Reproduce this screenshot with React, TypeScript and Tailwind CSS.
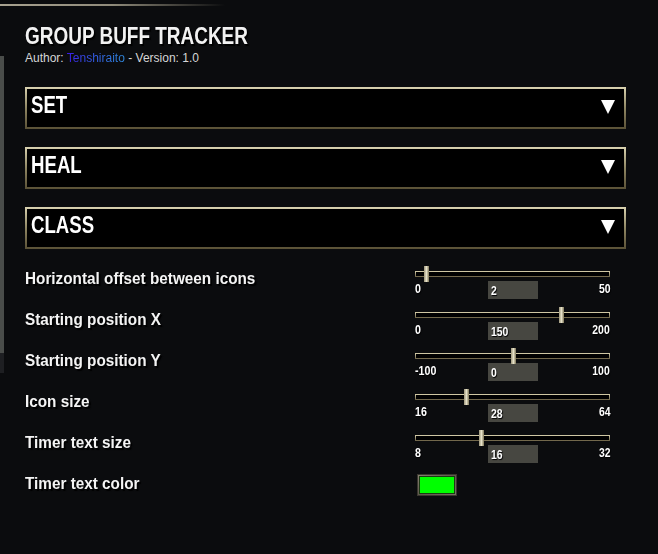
import React from 'react';

// ── Data ──────────────────────────────────────────────────────────────────────

interface SliderRow {
  label: string;
  min: number;
  max: number;
  value: number;
}

const DROPDOWNS = ['SET', 'HEAL', 'CLASS'];

const SLIDERS: SliderRow[] = [
  { label: 'Horizontal offset between icons', min: 0, max: 50, value: 2 },
  { label: 'Starting position X', min: 0, max: 200, value: 150 },
  { label: 'Starting position Y', min: -100, max: 100, value: 0 },
  { label: 'Icon size', min: 16, max: 64, value: 28 },
  { label: 'Timer text size', min: 8, max: 32, value: 16 },
];

// Game UI font is a bold condensed face; squeeze Liberation Sans to match
const LABEL =
  'pt-[4px] text-[17px] leading-[17px] font-bold text-[#f4f4f4] [text-shadow:2px_2px_1px_#000]';

// ── Pieces ────────────────────────────────────────────────────────────────────

function Dropdown({ label }: { label: string }) {
  return (
    <div className="h-[42px] p-[2px] bg-gradient-to-b from-[#d9d2b0] via-[#8f8663] to-[#5a5136]">
      <div className="h-full bg-black flex items-start justify-between pl-[4px] pr-[8px] pt-[5px]">
        <span className="inline-block origin-left scale-x-[0.81] text-[23px] leading-[23px] font-bold text-white [text-shadow:1px_1px_1px_#000]">
          {label}
        </span>
        <svg width="16" height="16" viewBox="0 0 16 16" className="mt-[5px]">
          <defs>
            <filter id={`blur-${label}`}>
              <feGaussianBlur stdDeviation="0.6" />
            </filter>
          </defs>
          <polygon points="1,1 15,1 8,15" fill="#fff" filter={`url(#blur-${label})`} />
        </svg>
      </div>
    </div>
  );
}

function Slider({ min, max, value }: SliderRow) {
  const pct = (value - min) / (max - min);
  return (
    <div className="w-[195px]">
      <div className="relative h-[15px] pt-[5px]">
        <div className="h-[6px] p-[1px] bg-gradient-to-b from-[#d8d0ac] to-[#6a6044]">
          <div className="h-full bg-black" />
        </div>
        <div
          className="absolute top-0 w-[5px] h-[16px] bg-gradient-to-r from-[#9c957a] via-[#e6e1c8] to-[#7d7558]"
          style={{ left: 1 + pct * 190 }}
        />
      </div>
      <div className="grid grid-cols-[73px_50px_1fr] h-[16px] text-[13px] leading-[16px] font-bold text-white [text-shadow:1px_1px_1px_#000]">
        <span>
          <span className="inline-block origin-left scale-x-[0.82]">{min}</span>
        </span>
        <span className="bg-[#474741] pl-[3px] pt-[2px]">
          <span className="inline-block origin-left scale-x-[0.8]">{value}</span>
        </span>
        <span className="text-right">
          <span className="inline-block origin-right scale-x-[0.8]">{max}</span>
        </span>
      </div>
    </div>
  );
}

// ── Main Component ────────────────────────────────────────────────────────────

export default function App() {
  return (
    <div className="relative w-[658px] h-[554px] overflow-hidden bg-[#0b0c0e] font-['Liberation_Sans',Arial,sans-serif]">
      {/* top frame remnant */}
      <div className="absolute left-0 top-[4px] w-[225px] h-[2px] bg-gradient-to-r from-[#a8a290] via-[#8f8a7a] to-transparent" />
      {/* left scroll strip */}
      <div className="absolute left-0 top-[56px] w-[4px] h-[297px] bg-[#4a4d4a]" />
      <div className="absolute left-0 top-[353px] w-[4px] h-[20px] bg-[#1e1f22]" />

      <div className="flex flex-col pl-[25px] pr-[32px] pt-[24px]">
        <h1 className="text-[24px] leading-[24px] font-bold text-[#f2f2f2] [text-shadow:2px_2px_1px_#000]">
          <span className="inline-block origin-left scale-x-[0.79]">GROUP BUFF TRACKER</span>
        </h1>
        <p className="mt-[4px] text-[12px] leading-[12px] text-[#d6d6d6]">
          Author:{' '}
          <span className="bg-gradient-to-r from-[#3b14e6] to-[#2f86d8] bg-clip-text text-transparent">
            Tenshiraito
          </span>{' '}
          - Version: 1.0
        </p>

        <div className="mt-[23px] flex flex-col gap-[18px]">
          {DROPDOWNS.map((d) => (
            <Dropdown key={d} label={d} />
          ))}
        </div>

        <div className="mt-[17px] flex flex-col gap-[10px]">
          {SLIDERS.map((s) => (
            <div key={s.label} className="grid grid-cols-[390px_195px] h-[31px]">
              <span className={LABEL}>
                <span className="inline-block origin-left scale-x-[0.9]">{s.label}</span>
              </span>
              <Slider {...s} />
            </div>
          ))}
          <div className="grid grid-cols-[390px_195px] h-[31px]">
            <span className={LABEL}>
              <span className="inline-block origin-left scale-x-[0.9]">Timer text color</span>
            </span>
            <div className="pt-[3px] pl-[2px]">
              <div className="w-[40px] h-[22px] p-[2px] bg-gradient-to-br from-[#8a8474] via-[#5e594c] to-[#7a7466] shadow-[inset_0_0_0_1px_#3a372f]">
                <div className="h-full bg-[#00ff00] shadow-[inset_0_0_0_1px_#1b3a12]" />
              </div>
            </div>
          </div>
        </div>
      </div>
    </div>
  );
}
